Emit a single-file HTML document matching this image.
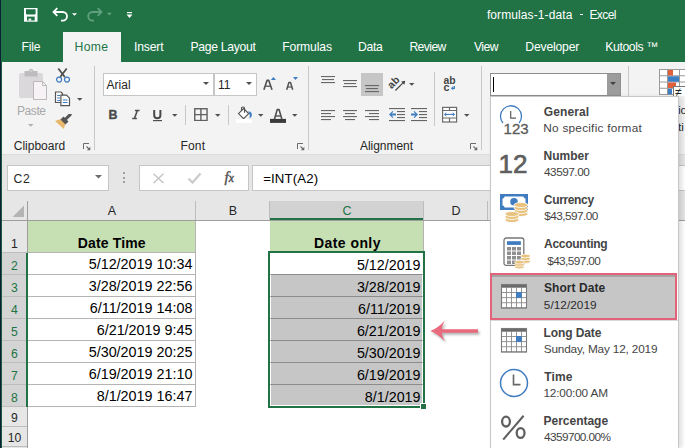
<!DOCTYPE html>
<html><head><meta charset="utf-8"><style>
html,body{margin:0;padding:0;}
body{width:685px;height:448px;overflow:hidden;position:relative;background:#fff;font-family:"Liberation Sans", sans-serif;}
body>div,body>svg{position:absolute;white-space:nowrap;}
</style></head><body>
<div style="left:0px;top:0px;width:685px;height:62px;background:#217346;"></div>
<div style="left:63px;top:32px;width:58px;height:30px;background:#f3f3f3;"></div>
<div style="left:0px;top:62px;width:685px;height:92px;background:#f3f3f3;"></div>
<div style="left:0px;top:154px;width:685px;height:67px;background:#e6e6e6;"></div>
<div style="left:0px;top:154px;width:685px;height:1px;background:#dcdcdc;"></div>
<svg style="left:23px;top:7px;" width="17" height="16" viewBox="0 0 17 16"><rect x="1" y="1" width="13.5" height="13.7" fill="#fff"/><path d="M3 2.2 H12.6 V6.8 L11.8 7.6 H3.8 L3 6.8z" fill="#217346"/><rect x="4" y="9.6" width="7.7" height="3.9" fill="#217346"/><rect x="5.6" y="11.6" width="2.6" height="1.9" fill="#fff"/></svg>
<svg style="left:50px;top:6px;" width="30" height="18" viewBox="0 0 30 18"><path d="M3.5 6 H12.7 A4.3 4.3 0 0 1 12.7 14.6 H11" fill="none" stroke="#fff" stroke-width="1.8"/><path d="M7.3 2.2 L3.5 6 L7.3 9.8" fill="none" stroke="#fff" stroke-width="1.8"/><path d="M22 7.2 h5 l-2.5 2.6z" fill="#fff"/></svg>
<svg style="left:86px;top:6px;" width="30" height="18" viewBox="0 0 30 18"><path d="M15.5 6 H6.5 A4.3 4.3 0 0 0 6.5 14.6 H8" fill="none" stroke="#61a07f" stroke-width="1.8"/><path d="M11.7 2.2 L15.5 6 L11.7 9.8" fill="none" stroke="#61a07f" stroke-width="1.8"/><path d="M20.8 6.8 h5 l-2.5 2.6z" fill="#61a07f"/></svg>
<svg style="left:126px;top:11px;" width="7" height="8" viewBox="0 0 7 8"><rect x="1" y="1" width="5" height="1.2" fill="#fff"/><path d="M0.5 3.5 h6 l-3 3.5z" fill="#fff"/></svg>
<div style="top:8.54px;font-size:12px;line-height:12px;color:#fff;font-weight:400;letter-spacing:0.1px;left:486.88px;">formulas-1-data</div>
<div style="left:579.7px;top:14.3px;width:3.8px;height:1.1px;background:#fff;"></div>
<div style="top:8.54px;font-size:12px;line-height:12px;color:#fff;font-weight:400;letter-spacing:-0.6px;left:589.44px;">Excel</div>
<div style="top:40.67px;font-size:12.2px;line-height:12.2px;color:#fff;font-weight:400;letter-spacing:-0.226px;left:21.52px;white-space:pre;">File</div>
<div style="top:40.67px;font-size:12.2px;line-height:12.2px;color:#217346;font-weight:400;letter-spacing:0.337px;left:74.62px;white-space:pre;">Home</div>
<div style="top:40.67px;font-size:12.2px;line-height:12.2px;color:#fff;font-weight:400;letter-spacing:-0.196px;left:134.1px;white-space:pre;">Insert</div>
<div style="top:40.67px;font-size:12.2px;line-height:12.2px;color:#fff;font-weight:400;letter-spacing:-0.297px;left:190.42px;white-space:pre;">Page Layout</div>
<div style="top:40.67px;font-size:12.2px;line-height:12.2px;color:#fff;font-weight:400;letter-spacing:-0.133px;left:282.22px;white-space:pre;">Formulas</div>
<div style="top:40.67px;font-size:12.2px;line-height:12.2px;color:#fff;font-weight:400;letter-spacing:-0.329px;left:358.12px;white-space:pre;">Data</div>
<div style="top:40.67px;font-size:12.2px;line-height:12.2px;color:#fff;font-weight:400;letter-spacing:-0.592px;left:409.42px;white-space:pre;">Review</div>
<div style="top:40.67px;font-size:12.2px;line-height:12.2px;color:#fff;font-weight:400;letter-spacing:-0.584px;left:474.0px;white-space:pre;">View</div>
<div style="top:40.67px;font-size:12.2px;line-height:12.2px;color:#fff;font-weight:400;letter-spacing:-0.189px;left:525.32px;white-space:pre;">Developer</div>
<div style="top:40.67px;font-size:12.2px;line-height:12.2px;color:#fff;font-weight:400;letter-spacing:-0.365px;left:605.22px;white-space:pre;">Kutools ™</div>
<div style="left:0px;top:0px;width:1px;height:448px;background:#0b2236;"></div>
<div style="left:1px;top:62px;width:1px;height:386px;background:#1d5a3c;"></div>
<div style="left:94px;top:66px;width:1px;height:84px;background:#c8c8c8;"></div>
<div style="left:308px;top:66px;width:1px;height:84px;background:#c8c8c8;"></div>
<div style="left:481px;top:66px;width:1px;height:84px;background:#c8c8c8;"></div>
<div style="left:628px;top:66px;width:1px;height:30px;background:#c8c8c8;"></div>
<div style="top:139.84px;font-size:12px;line-height:12px;color:#262626;font-weight:400;letter-spacing:-0.003px;left:-160.5515px;width:400px;text-align:center;">Clipboard</div>
<div style="top:139.84px;font-size:12px;line-height:12px;color:#262626;font-weight:400;letter-spacing:0.193px;left:-7.1535px;width:400px;text-align:center;">Font</div>
<div style="top:139.84px;font-size:12px;line-height:12px;color:#262626;font-weight:400;letter-spacing:-0.035px;left:186.4825px;width:400px;text-align:center;">Alignment</div>
<svg style="left:83px;top:143px;" width="8" height="8" viewBox="0 0 8 8"><path d="M0.5 6 V0.5 H6" fill="none" stroke="#6b6b6b" stroke-width="1"/><path d="M3.5 3.5 L6.5 6.5" stroke="#6b6b6b" stroke-width="1.1"/><path d="M7.3 3.8 V7.3 H3.8z" fill="#6b6b6b"/></svg>
<svg style="left:297px;top:143px;" width="8" height="8" viewBox="0 0 8 8"><path d="M0.5 6 V0.5 H6" fill="none" stroke="#6b6b6b" stroke-width="1"/><path d="M3.5 3.5 L6.5 6.5" stroke="#6b6b6b" stroke-width="1.1"/><path d="M7.3 3.8 V7.3 H3.8z" fill="#6b6b6b"/></svg>
<svg style="left:470px;top:143px;" width="8" height="8" viewBox="0 0 8 8"><path d="M0.5 6 V0.5 H6" fill="none" stroke="#6b6b6b" stroke-width="1"/><path d="M3.5 3.5 L6.5 6.5" stroke="#6b6b6b" stroke-width="1.1"/><path d="M7.3 3.8 V7.3 H3.8z" fill="#6b6b6b"/></svg>
<svg style="left:17px;top:68px;" width="32" height="34" viewBox="0 0 32 34"><rect x="2" y="5" width="24" height="25" rx="2" fill="#dbd8db"/><path d="M7.5 3 H20.5 V8.5 H7.5z" fill="#bdbdbd"/><circle cx="14" cy="3" r="2.2" fill="#bdbdbd"/><circle cx="14" cy="3" r="0.9" fill="#dbd8db"/><path d="M16.5 13.5 H25.5 L29.5 17.5 V31.5 H16.5z" fill="#f6f2f6" stroke="#b9b9b9" stroke-width="1"/><path d="M25.5 13.5 V17.5 H29.5" fill="none" stroke="#b9b9b9" stroke-width="1"/></svg>
<div style="top:104.74px;font-size:12px;line-height:12px;color:#a8a8a8;font-weight:400;letter-spacing:-0.44px;left:-168.72px;width:400px;text-align:center;">Paste</div>
<svg style="left:28px;top:124px;" width="6" height="4" viewBox="0 0 6 4"><path d="M0 0 h5.5 l-2.75 2.8z" fill="#b0b0b0"/></svg>
<svg style="left:54px;top:67px;" width="18" height="18" viewBox="0 0 18 18"><path d="M4.3 1.5 L10.8 10 M12.7 1.5 L6.2 10" stroke="#505050" stroke-width="1.8"/><circle cx="5.1" cy="12.6" r="2.5" fill="#f3f3f3" stroke="#3f7cc0" stroke-width="1.2"/><circle cx="13" cy="12.6" r="2.5" fill="#f3f3f3" stroke="#3f7cc0" stroke-width="1.2"/></svg>
<svg style="left:54px;top:91px;" width="18" height="17" viewBox="0 0 18 17"><path d="M1.5 1 H7 L8.5 2.5 V11.5 H1.5z" fill="#fff" stroke="#555" stroke-width="1.2"/><path d="M3.2 4.5 H6 M3.2 7 H6 M3.2 9.5 H6" stroke="#3f7cc0" stroke-width="1"/><path d="M6.9 4.2 H12.5 L15.5 7.2 V14.7 H6.9z" fill="#fff" stroke="#555" stroke-width="1.2"/><path d="M8.8 9 H13.5 M8.8 11.5 H13.5" stroke="#3f7cc0" stroke-width="1"/></svg>
<svg style="left:77px;top:98px;" width="6" height="4" viewBox="0 0 6 4"><path d="M0 0 h5.5 l-2.75 2.8z" fill="#505050"/></svg>
<svg style="left:54px;top:114px;" width="18" height="16" viewBox="0 0 18 16"><path d="M1 7 L7 5 L11.5 9.5 L9.8 15z" fill="#e8b86c"/><path d="M6.5 5.5 L9.5 2.5 L14.5 7.5 L11.5 10.5z" fill="#555"/><path d="M12 4.8 L16.2 0.6" stroke="#555" stroke-width="3" stroke-linecap="round"/></svg>
<div style="left:103px;top:73px;width:111px;height:23px;box-sizing:border-box;border:1px solid #c6c6c6;background:#fff;"></div>
<div style="top:78.84px;font-size:12px;line-height:12px;color:#262626;font-weight:400;letter-spacing:0.055px;left:106.4px;">Arial</div>
<svg style="left:203px;top:82px;" width="7" height="4" viewBox="0 0 7 4"><path d="M0 0 h6 l-3 3z" fill="#505050"/></svg>
<div style="left:214px;top:73px;width:43px;height:23px;box-sizing:border-box;border:1px solid #c6c6c6;background:#fff;"></div>
<div style="top:78.84px;font-size:12px;line-height:12px;color:#262626;font-weight:400;left:217.9px;">11</div>
<svg style="left:246px;top:82px;" width="7" height="4" viewBox="0 0 7 4"><path d="M0 0 h6 l-3 3z" fill="#505050"/></svg>
<svg style="left:262px;top:76px;" width="16" height="16" viewBox="0 0 16 16"><path d="M1.9 13.7 L5 4.4 H6.8 L10 13.7" fill="none" stroke="#505050" stroke-width="1.6" stroke-linejoin="round"/><path d="M3.3 10.2 H8.6" stroke="#505050" stroke-width="1.3"/><path d="M8.8 4 L11.4 1.1 L14 4z" fill="#3f7cc0"/></svg>
<svg style="left:285px;top:76px;" width="14" height="16" viewBox="0 0 14 16"><path d="M1.7 13.7 L3.9 6.4 H5.5 L7.7 13.7" fill="none" stroke="#505050" stroke-width="1.5" stroke-linejoin="round"/><path d="M2.8 11 H6.7" stroke="#505050" stroke-width="1.2"/><path d="M8 1.1 H13 L10.5 4z" fill="#3f7cc0"/></svg>
<svg style="left:108px;top:108px;" width="11" height="12" viewBox="0 0 11 12"><text x="0.6" y="11" font-family="Liberation Sans" font-weight="700" font-size="12.4" fill="#4a4a4a" stroke="#4a4a4a" stroke-width="0.35">B</text></svg>
<svg style="left:130px;top:108px;" width="11" height="12" viewBox="0 0 11 12"><path d="M4.9 2.5 H9.6 M2.2 10.5 H6.9 M7.3 2.5 L4.5 10.5" fill="none" stroke="#505050" stroke-width="1.6"/></svg>
<svg style="left:151px;top:108px;" width="13" height="15" viewBox="0 0 13 15"><path d="M3.2 2 V7.2 A3.1 3.1 0 0 0 9.4 7.2 V2" fill="none" stroke="#4a4a4a" stroke-width="2"/><rect x="2" y="12" width="9" height="1.2" fill="#505050"/></svg>
<svg style="left:172px;top:114px;" width="6" height="4" viewBox="0 0 6 4"><path d="M0 0 h5.5 l-2.75 2.8z" fill="#505050"/></svg>
<div style="left:185px;top:105px;width:1px;height:20px;background:#c8c8c8;"></div>
<svg style="left:194px;top:108px;" width="14" height="13" viewBox="0 0 14 13"><rect x="0.75" y="0.75" width="12.3" height="11.8" fill="none" stroke="#606060" stroke-width="1.4"/><path d="M6.9 1 V12.5 M1 6.65 H13" stroke="#606060" stroke-width="1.4"/></svg>
<svg style="left:215px;top:114px;" width="6" height="4" viewBox="0 0 6 4"><path d="M0 0 h5.5 l-2.75 2.8z" fill="#505050"/></svg>
<div style="left:228px;top:105px;width:1px;height:20px;background:#c8c8c8;"></div>
<svg style="left:236px;top:106px;" width="17" height="17" viewBox="0 0 17 17"><path d="M2.5 7.6 L7.6 2.5 L12.7 7.6 L7.6 12.7z" fill="#fff" stroke="#505050" stroke-width="1.1"/><path d="M5.5 5 V2.2 Q5.5 1 6.7 1 H7.3 Q8.5 1 8.5 2.2 V6.8" fill="none" stroke="#505050" stroke-width="1.1"/><path d="M12.3 5.2 Q16.6 6 15.8 9.8 Q15.3 11.5 13.6 12.6 Q14.4 8.6 12.3 5.2z" fill="#3f7cc0"/><rect x="0" y="13" width="15.8" height="3.9" fill="#fff"/></svg>
<svg style="left:258px;top:114px;" width="6" height="4" viewBox="0 0 6 4"><path d="M0 0 h5.5 l-2.75 2.8z" fill="#505050"/></svg>
<svg style="left:270px;top:108px;" width="17" height="16" viewBox="0 0 17 16"><path d="M4.5 11 L7.2 1.6 H9.1 L11.8 11" fill="none" stroke="#505050" stroke-width="1.6" stroke-linejoin="round"/><path d="M5.6 8 H10.7" stroke="#505050" stroke-width="1.4"/><rect x="0" y="10.9" width="16" height="4" fill="#3a3a3a"/></svg>
<svg style="left:292px;top:114px;" width="6" height="4" viewBox="0 0 6 4"><path d="M0 0 h5.5 l-2.75 2.8z" fill="#505050"/></svg>
<svg style="left:321px;top:76px;" width="16" height="14" viewBox="0 0 16 14"><rect x="0" y="0" width="14" height="1.1" fill="#666"/><rect x="1" y="3" width="12" height="1.1" fill="#666"/><rect x="0" y="6" width="14" height="1.1" fill="#666"/></svg>
<svg style="left:343px;top:80px;" width="16" height="14" viewBox="0 0 16 14"><rect x="0" y="0" width="14" height="1.1" fill="#666"/><rect x="1" y="3" width="12" height="1.1" fill="#666"/><rect x="0" y="6" width="14" height="1.1" fill="#666"/></svg>
<div style="left:361px;top:73px;width:22px;height:23px;background:#c6c6c6;"></div>
<svg style="left:365px;top:85px;" width="16" height="14" viewBox="0 0 16 14"><rect x="0" y="0" width="14" height="1.1" fill="#666"/><rect x="1" y="3" width="12" height="1.1" fill="#666"/><rect x="0" y="6" width="14" height="1.1" fill="#666"/></svg>
<svg style="left:321px;top:110px;" width="16" height="14" viewBox="0 0 16 14"><rect x="0" y="0" width="14" height="1.1" fill="#666"/><rect x="0" y="3" width="10" height="1.1" fill="#666"/><rect x="0" y="6" width="14" height="1.1" fill="#666"/><rect x="0" y="9" width="10" height="1.1" fill="#666"/></svg>
<svg style="left:343px;top:110px;" width="16" height="14" viewBox="0 0 16 14"><rect x="0" y="0" width="14" height="1.1" fill="#666"/><rect x="2" y="3" width="10" height="1.1" fill="#666"/><rect x="0" y="6" width="14" height="1.1" fill="#666"/><rect x="2" y="9" width="10" height="1.1" fill="#666"/></svg>
<svg style="left:365px;top:110px;" width="16" height="14" viewBox="0 0 16 14"><rect x="0" y="0" width="14" height="1.1" fill="#666"/><rect x="4" y="3" width="10" height="1.1" fill="#666"/><rect x="0" y="6" width="14" height="1.1" fill="#666"/><rect x="4" y="9" width="10" height="1.1" fill="#666"/></svg>
<svg style="left:386px;top:72px;" width="24" height="24" viewBox="0 0 24 24"><text x="0" y="0" font-family="Liberation Sans" font-weight="700" font-size="10.5" fill="#454545" transform="translate(5.6 17.2) rotate(-45)">ab</text><path d="M9.4 18.5 L17.5 10.4" stroke="#454545" stroke-width="1.2"/><path d="M19.2 8.7 L15.2 9.5 L18.4 12.7z" fill="#454545"/></svg>
<svg style="left:409px;top:83px;" width="6" height="4" viewBox="0 0 6 4"><path d="M0 0 h5.5 l-2.75 2.8z" fill="#505050"/></svg>
<svg style="left:389px;top:107px;" width="17" height="15" viewBox="0 0 17 15"><g fill="#666"><rect x="0" y="1" width="16" height="1.1"/><rect x="8" y="4" width="8" height="1.1"/><rect x="8" y="7" width="8" height="1.1"/><rect x="8" y="10" width="8" height="1.1"/><rect x="0" y="13" width="16" height="1.1"/></g><path d="M0 7.5 L3.6 4 L4.4 4.8 L2.6 6.6 H7 V8.4 H2.6 L4.4 10.2 L3.6 11z" fill="#3f7cc0"/></svg>
<svg style="left:411px;top:107px;" width="17" height="15" viewBox="0 0 17 15"><g fill="#666"><rect x="0" y="1" width="16" height="1.1"/><rect x="8" y="4" width="8" height="1.1"/><rect x="8" y="7" width="8" height="1.1"/><rect x="8" y="10" width="8" height="1.1"/><rect x="0" y="13" width="16" height="1.1"/></g><path d="M7 7.5 L3.4 4 L2.6 4.8 L4.4 6.6 H0 V8.4 H4.4 L2.6 10.2 L3.4 11z" fill="#3f7cc0"/></svg>
<div style="left:434px;top:72px;width:1px;height:54px;background:#c8c8c8;"></div>
<svg style="left:442px;top:74px;" width="18" height="20" viewBox="0 0 18 20"><text x="1.6" y="9.5" font-family="Liberation Sans" font-weight="700" font-size="10.3" fill="#454545">ab</text><text x="1.6" y="16.9" font-family="Liberation Sans" font-weight="700" font-size="10.8" fill="#454545">c</text><path d="M12.3 12 V14.3 H10" fill="none" stroke="#3f7cc0" stroke-width="1.3"/><path d="M8.8 14.3 l2.4 -2 v4z" fill="#3f7cc0"/></svg>
<svg style="left:441px;top:106px;" width="17" height="17" viewBox="0 0 17 17"><rect x="1.6" y="1.4" width="14" height="14.6" fill="#fff" stroke="#6b6b6b" stroke-width="1.2"/><path d="M1.6 4.5 H15.6 M1.6 12 H15.6 M8.5 1.4 V4.5 M8.5 12 V16" stroke="#6b6b6b" stroke-width="1.2"/><path d="M4.5 8.4 H12.5" stroke="#3f7cc0" stroke-width="1.1"/><path d="M3 8.4 l2.2 -2.2 v4.4z M14 8.4 l-2.2 -2.2 v4.4z" fill="#3f7cc0"/></svg>
<svg style="left:464px;top:114px;" width="6" height="4" viewBox="0 0 6 4"><path d="M0 0 h5.5 l-2.75 2.8z" fill="#505050"/></svg>
<div style="left:490px;top:73px;width:131px;height:23px;box-sizing:border-box;border:1px solid #8f8f8f;background:#fff;"></div>
<div style="left:607px;top:74px;width:13px;height:21px;background:#9c9c9c;"></div>
<svg style="left:610px;top:82px;" width="7" height="4" viewBox="0 0 7 4"><path d="M0 0 h6 l-3 3z" fill="#404040"/></svg>
<div style="left:493px;top:77px;width:1px;height:15px;background:#000;"></div>
<svg style="left:659px;top:69px;" width="26" height="27" viewBox="0 0 26 27"><rect x="0.5" y="0.5" width="30" height="25" fill="#fff" stroke="#9a9a9a"/><path d="M0.5 6.75 H30 M0.5 13 H30 M0.5 19.25 H30 M8.5 0 V26 M20.5 0 V26" stroke="#9a9a9a" stroke-width="1"/><rect x="9" y="1" width="5" height="5.5" fill="#e0603a"/><rect x="9" y="7.25" width="11" height="5.5" fill="#3c7fc4"/><rect x="9" y="13.5" width="8" height="5.5" fill="#e0603a"/><rect x="9" y="19.75" width="4" height="5.5" fill="#3c7fc4"/><rect x="14.5" y="17.5" width="12" height="10" fill="#fff" stroke="#777"/><text x="16.2" y="26.5" font-family="Liberation Sans" font-size="12" fill="#222">≠</text></svg>
<div style="top:104.1px;font-size:11.7px;line-height:11.7px;color:#262626;font-weight:400;left:678px;white-space:pre;">ic</div>
<div style="top:121.1px;font-size:11.7px;line-height:11.7px;color:#262626;font-weight:400;left:678px;white-space:pre;">ti</div>
<div style="left:7px;top:165px;width:102px;height:26px;box-sizing:border-box;border:1px solid #c6c6c6;background:#fff;"></div>
<div style="top:172.67px;font-size:12.2px;line-height:12.2px;color:#262626;font-weight:400;letter-spacing:0.904px;left:13.39px;">C2</div>
<svg style="left:95px;top:175px;" width="8" height="5" viewBox="0 0 8 5"><path d="M0 0 h7 l-3.5 3.5z" fill="#6b6b6b"/></svg>
<div style="left:123px;top:172px;width:2px;height:2px;background:#a0a0a0;"></div>
<div style="left:123px;top:176.5px;width:2px;height:2px;background:#a0a0a0;"></div>
<div style="left:123px;top:181px;width:2px;height:2px;background:#a0a0a0;"></div>
<div style="left:139px;top:165px;width:110px;height:26px;box-sizing:border-box;border:1px solid #c6c6c6;background:#fff;"></div>
<svg style="left:187px;top:172px;" width="15" height="13" viewBox="0 0 15 13"><path d="M1.5 6.5 L5.5 10.5 L13.5 1.5" fill="none" stroke="#cccccc" stroke-width="2.4"/></svg>
<svg style="left:153px;top:173px;" width="11" height="11" viewBox="0 0 11 11"><path d="M0.5 0.8 L10.5 10 M10.5 0.8 L0.5 10" stroke="#c4c4c4" stroke-width="1.4"/></svg>
<div style="top:169.8px;font-size:15px;line-height:15px;color:#505050;font-weight:400;left:224.5px;font-family:'Liberation Serif';-webkit-text-stroke:0.4px #505050;"><i>f</i><i style="font-size:11.5px">x</i></div>
<div style="left:252px;top:165px;width:440px;height:26px;box-sizing:border-box;border:1px solid #c6c6c6;background:#fff;"></div>
<div style="top:171.53px;font-size:13.2px;line-height:13.2px;color:#000;font-weight:400;letter-spacing:0.171px;left:263.14px;">=INT(A2)</div>
<div style="left:2px;top:201px;width:683px;height:19px;background:#e6e6e6;"></div>
<div style="left:2px;top:220px;width:683px;height:1px;background:#9e9e9e;"></div>
<div style="left:2px;top:221px;width:25px;height:227px;background:#e6e6e6;"></div>
<div style="left:27px;top:201px;width:1px;height:247px;background:#9e9e9e;"></div>
<svg style="left:12px;top:205px;" width="13" height="13" viewBox="0 0 13 13"><path d="M0.5 12 L12 0.5 V12z" fill="#b4b4b4"/></svg>
<div style="left:28px;top:221px;width:657px;height:227px;background:#fff;"></div>
<div style="left:195px;top:201px;width:1px;height:19px;background:#bdbdbd;"></div>
<div style="top:204.72px;font-size:12.5px;line-height:12.5px;color:#262626;font-weight:400;left:-88.0px;width:400px;text-align:center;">A</div>
<div style="left:269px;top:201px;width:1px;height:19px;background:#bdbdbd;"></div>
<div style="top:204.72px;font-size:12.5px;line-height:12.5px;color:#262626;font-weight:400;left:33.0px;width:400px;text-align:center;">B</div>
<div style="left:270px;top:201px;width:153px;height:19px;background:#d2d2d2;"></div>
<div style="left:270px;top:218px;width:153px;height:2px;background:#217346;"></div>
<div style="left:423px;top:201px;width:1px;height:19px;background:#bdbdbd;"></div>
<div style="top:204.72px;font-size:12.5px;line-height:12.5px;color:#217346;font-weight:400;left:147.0px;width:400px;text-align:center;">C</div>
<div style="left:487px;top:201px;width:1px;height:19px;background:#bdbdbd;"></div>
<div style="top:204.72px;font-size:12.5px;line-height:12.5px;color:#262626;font-weight:400;left:256.0px;width:400px;text-align:center;">D</div>
<div style="left:2px;top:252px;width:25px;height:1px;background:#bdbdbd;"></div>
<div style="top:237.67px;font-size:12.2px;line-height:12.2px;color:#262626;font-weight:400;left:-185.5px;width:400px;text-align:center;">1</div>
<div style="left:2px;top:253px;width:25px;height:21px;background:#d4d4d4;"></div>
<div style="left:2px;top:274px;width:25px;height:1px;background:#bdbdbd;"></div>
<div style="top:259.67px;font-size:12.2px;line-height:12.2px;color:#217346;font-weight:400;left:-185.5px;width:400px;text-align:center;">2</div>
<div style="left:2px;top:275px;width:25px;height:21px;background:#d4d4d4;"></div>
<div style="left:2px;top:296px;width:25px;height:1px;background:#bdbdbd;"></div>
<div style="top:281.67px;font-size:12.2px;line-height:12.2px;color:#217346;font-weight:400;left:-185.5px;width:400px;text-align:center;">3</div>
<div style="left:2px;top:297px;width:25px;height:21px;background:#d4d4d4;"></div>
<div style="left:2px;top:318px;width:25px;height:1px;background:#bdbdbd;"></div>
<div style="top:303.67px;font-size:12.2px;line-height:12.2px;color:#217346;font-weight:400;left:-185.5px;width:400px;text-align:center;">4</div>
<div style="left:2px;top:319px;width:25px;height:21px;background:#d4d4d4;"></div>
<div style="left:2px;top:340px;width:25px;height:1px;background:#bdbdbd;"></div>
<div style="top:325.67px;font-size:12.2px;line-height:12.2px;color:#217346;font-weight:400;left:-185.5px;width:400px;text-align:center;">5</div>
<div style="left:2px;top:341px;width:25px;height:21px;background:#d4d4d4;"></div>
<div style="left:2px;top:362px;width:25px;height:1px;background:#bdbdbd;"></div>
<div style="top:347.67px;font-size:12.2px;line-height:12.2px;color:#217346;font-weight:400;left:-185.5px;width:400px;text-align:center;">6</div>
<div style="left:2px;top:363px;width:25px;height:21px;background:#d4d4d4;"></div>
<div style="left:2px;top:384px;width:25px;height:1px;background:#bdbdbd;"></div>
<div style="top:369.67px;font-size:12.2px;line-height:12.2px;color:#217346;font-weight:400;left:-185.5px;width:400px;text-align:center;">7</div>
<div style="left:2px;top:385px;width:25px;height:21px;background:#d4d4d4;"></div>
<div style="left:2px;top:406px;width:25px;height:1px;background:#bdbdbd;"></div>
<div style="top:391.67px;font-size:12.2px;line-height:12.2px;color:#217346;font-weight:400;left:-185.5px;width:400px;text-align:center;">8</div>
<div style="left:2px;top:426px;width:25px;height:1px;background:#bdbdbd;"></div>
<div style="top:411.67px;font-size:12.2px;line-height:12.2px;color:#262626;font-weight:400;left:-185.5px;width:400px;text-align:center;">9</div>
<div style="left:2px;top:446px;width:25px;height:1px;background:#bdbdbd;"></div>
<div style="top:431.67px;font-size:12.2px;line-height:12.2px;color:#262626;font-weight:400;left:-185.5px;width:400px;text-align:center;">10</div>
<div style="left:2px;top:470px;width:25px;height:1px;background:#bdbdbd;"></div>
<div style="top:455.67px;font-size:12.2px;line-height:12.2px;color:#262626;font-weight:400;left:-185.5px;width:400px;text-align:center;">11</div>
<div style="left:26px;top:253px;width:2px;height:154px;background:#217346;"></div>
<div style="left:28px;top:221px;width:167px;height:31px;background:#c6e0b4;"></div>
<div style="left:270px;top:221px;width:153px;height:31px;background:#c6e0b4;"></div>
<div style="left:271px;top:275px;width:151px;height:130px;background:#c6c6c6;"></div>
<div style="left:195px;top:221px;width:1px;height:186px;background:#b4b4b4;"></div>
<div style="left:28px;top:252px;width:168px;height:1px;background:#b4b4b4;"></div>
<div style="left:28px;top:274px;width:168px;height:1px;background:#b4b4b4;"></div>
<div style="left:28px;top:296px;width:168px;height:1px;background:#b4b4b4;"></div>
<div style="left:28px;top:318px;width:168px;height:1px;background:#b4b4b4;"></div>
<div style="left:28px;top:340px;width:168px;height:1px;background:#b4b4b4;"></div>
<div style="left:28px;top:362px;width:168px;height:1px;background:#b4b4b4;"></div>
<div style="left:28px;top:384px;width:168px;height:1px;background:#b4b4b4;"></div>
<div style="left:28px;top:406px;width:168px;height:1px;background:#b4b4b4;"></div>
<div style="left:423px;top:221px;width:1px;height:186px;background:#b4b4b4;"></div>
<div style="left:270px;top:252px;width:154px;height:1px;background:#b4b4b4;"></div>
<div style="left:270px;top:274px;width:154px;height:1px;background:#b4b4b4;"></div>
<div style="left:270px;top:296px;width:154px;height:1px;background:#b4b4b4;"></div>
<div style="left:270px;top:318px;width:154px;height:1px;background:#b4b4b4;"></div>
<div style="left:270px;top:340px;width:154px;height:1px;background:#b4b4b4;"></div>
<div style="left:270px;top:362px;width:154px;height:1px;background:#b4b4b4;"></div>
<div style="left:270px;top:384px;width:154px;height:1px;background:#b4b4b4;"></div>
<div style="left:270px;top:406px;width:154px;height:1px;background:#b4b4b4;"></div>
<div style="left:271px;top:274px;width:151px;height:1px;background:#8c8c8c;"></div>
<div style="left:271px;top:296px;width:151px;height:1px;background:#8c8c8c;"></div>
<div style="left:271px;top:318px;width:151px;height:1px;background:#8c8c8c;"></div>
<div style="left:271px;top:340px;width:151px;height:1px;background:#8c8c8c;"></div>
<div style="left:271px;top:362px;width:151px;height:1px;background:#8c8c8c;"></div>
<div style="left:271px;top:384px;width:151px;height:1px;background:#8c8c8c;"></div>
<div style="top:235.65px;font-size:14px;line-height:14px;color:#000;font-weight:700;letter-spacing:0.158px;left:-88.271px;width:400px;text-align:center;">Date&nbsp;Time</div>
<div style="top:235.65px;font-size:14px;line-height:14px;color:#000;font-weight:700;letter-spacing:0.435px;left:147.4675px;width:400px;text-align:center;">Date only</div>
<div style="top:257.45px;font-size:14.35px;line-height:14.35px;color:#000;font-weight:400;right:492.6px;text-align:right;">5/12/2019 10:34</div>
<div style="top:257.5px;font-size:14.3px;line-height:14.3px;color:#000;font-weight:400;right:264.5px;text-align:right;">5/12/2019</div>
<div style="top:279.45px;font-size:14.35px;line-height:14.35px;color:#000;font-weight:400;right:492.6px;text-align:right;">3/28/2019 22:56</div>
<div style="top:279.5px;font-size:14.3px;line-height:14.3px;color:#000;font-weight:400;right:264.5px;text-align:right;">3/28/2019</div>
<div style="top:301.45px;font-size:14.35px;line-height:14.35px;color:#000;font-weight:400;right:492.6px;text-align:right;">6/11/2019 14:08</div>
<div style="top:301.5px;font-size:14.3px;line-height:14.3px;color:#000;font-weight:400;right:264.5px;text-align:right;">6/11/2019</div>
<div style="top:323.45px;font-size:14.35px;line-height:14.35px;color:#000;font-weight:400;right:492.6px;text-align:right;">6/21/2019 9:45</div>
<div style="top:323.5px;font-size:14.3px;line-height:14.3px;color:#000;font-weight:400;right:264.5px;text-align:right;">6/21/2019</div>
<div style="top:345.45px;font-size:14.35px;line-height:14.35px;color:#000;font-weight:400;right:492.6px;text-align:right;">5/30/2019 20:25</div>
<div style="top:345.5px;font-size:14.3px;line-height:14.3px;color:#000;font-weight:400;right:264.5px;text-align:right;">5/30/2019</div>
<div style="top:367.45px;font-size:14.35px;line-height:14.35px;color:#000;font-weight:400;right:492.6px;text-align:right;">6/19/2019 21:10</div>
<div style="top:367.5px;font-size:14.3px;line-height:14.3px;color:#000;font-weight:400;right:264.5px;text-align:right;">6/19/2019</div>
<div style="top:389.45px;font-size:14.35px;line-height:14.35px;color:#000;font-weight:400;right:492.6px;text-align:right;">8/1/2019 16:47</div>
<div style="top:389.5px;font-size:14.3px;line-height:14.3px;color:#000;font-weight:400;right:264.5px;text-align:right;">8/1/2019</div>
<div style="left:268px;top:251px;width:157px;height:2px;background:#217346;"></div>
<div style="left:268px;top:251px;width:2px;height:157px;background:#217346;"></div>
<div style="left:423px;top:251px;width:2px;height:152px;background:#217346;"></div>
<div style="left:268px;top:406px;width:153px;height:2px;background:#217346;"></div>
<div style="left:420px;top:403px;width:7px;height:7px;background:#fff;"></div>
<div style="left:421px;top:404px;width:5px;height:5px;background:#217346;"></div>
<svg style="left:426px;top:316px;" width="58" height="32" viewBox="0 0 58 32"><defs><filter id="sh" x="-20%" y="-30%" width="150%" height="180%"><feGaussianBlur stdDeviation="1"/></filter></defs><g transform="translate(1.5,2)" filter="url(#sh)" opacity="0.45"><path d="M4.3 15 Q12.5 11.8 18.8 4.5 Q15.5 11 16 13.3 H52 V16.8 H16 Q15.5 19 18.8 25.3 Q12.5 18.2 4.3 15z" fill="#555"/></g><path d="M4.3 15 Q12.5 11.8 18.8 4.5 Q15.5 11 16 13.3 H52 V16.8 H16 Q15.5 19 18.8 25.3 Q12.5 18.2 4.3 15z" fill="#e96a7c"/></svg>
<div style="left:492px;top:97px;width:190px;height:351px;background:rgba(0,0,0,0.12);filter:blur(2px);"></div>
<div style="left:490px;top:96px;width:189px;height:360px;box-sizing:border-box;border:1px solid #c6c6c6;background:#fff;"></div>
<div style="left:492px;top:275px;width:183px;height:43px;background:#c6c6c6;"></div>
<div style="left:492px;top:275px;width:183px;height:2px;background:#a4a4a4;"></div>
<div style="left:491px;top:320px;width:187px;height:1px;background:#d8d8d8;"></div>
<div style="left:490px;top:273px;width:187px;height:47px;box-sizing:border-box;border:2px solid #e2627a;background:transparent;"></div>
<div style="top:106.04px;font-size:12px;line-height:12px;color:#444;font-weight:700;letter-spacing:0.093px;left:543.82px;white-space:pre;">General</div>
<div style="top:123.21px;font-size:11.8px;line-height:11.8px;color:#444;font-weight:400;letter-spacing:0.233px;left:543.36px;white-space:pre;">No specific format</div>
<div style="top:150.14px;font-size:12px;line-height:12px;color:#444;font-weight:700;letter-spacing:-0.004px;left:543.58px;white-space:pre;">Number</div>
<div style="top:167.31px;font-size:11.8px;line-height:11.8px;color:#444;font-weight:400;letter-spacing:-0.5px;left:544.06px;white-space:pre;">43597.00</div>
<div style="top:194.24px;font-size:12px;line-height:12px;color:#444;font-weight:700;letter-spacing:-0.34px;left:543.82px;white-space:pre;">Currency</div>
<div style="top:211.41px;font-size:11.8px;line-height:11.8px;color:#444;font-weight:400;letter-spacing:-0.548px;left:544.18px;white-space:pre;">$43,597.00</div>
<div style="top:238.34px;font-size:12px;line-height:12px;color:#444;font-weight:700;letter-spacing:-0.271px;left:544.06px;white-space:pre;">Accounting</div>
<div style="top:255.51px;font-size:11.8px;line-height:11.8px;color:#444;font-weight:400;letter-spacing:-0.592px;left:547.18px;white-space:pre;">$43,597.00</div>
<div style="top:282.44px;font-size:12px;line-height:12px;color:#2b2b2b;font-weight:700;letter-spacing:0.058px;left:543.94px;white-space:pre;">Short Date</div>
<div style="top:299.61px;font-size:11.8px;line-height:11.8px;color:#2b2b2b;font-weight:400;letter-spacing:0.032px;left:543.83px;white-space:pre;">5/12/2019</div>
<div style="top:326.54px;font-size:12px;line-height:12px;color:#444;font-weight:700;letter-spacing:-0.11px;left:543.58px;white-space:pre;">Long Date</div>
<div style="top:343.71px;font-size:11.8px;line-height:11.8px;color:#444;font-weight:400;letter-spacing:-0.18px;left:543.71px;white-space:pre;">Sunday, May 12, 2019</div>
<div style="top:370.64px;font-size:12px;line-height:12px;color:#444;font-weight:700;letter-spacing:0.153px;left:544.18px;white-space:pre;">Time</div>
<div style="top:387.81px;font-size:11.8px;line-height:11.8px;color:#444;font-weight:400;letter-spacing:-0.173px;left:543.47px;white-space:pre;">12:00:00 AM</div>
<div style="top:414.74px;font-size:12px;line-height:12px;color:#444;font-weight:700;letter-spacing:-0.022px;left:543.58px;white-space:pre;">Percentage</div>
<div style="top:431.91px;font-size:11.8px;line-height:11.8px;color:#444;font-weight:400;letter-spacing:-0.592px;left:544.06px;white-space:pre;">4359700.00%</div>
<svg style="left:498px;top:104px;" width="32" height="32" viewBox="0 0 32 32"><path d="M4.96 19 A10.5 10.5 0 1 1 21.04 19" fill="none" stroke="#3f7cc0" stroke-width="1.3"/><path d="M12.7 7 V14.2 H18" fill="none" stroke="#5b5b5b" stroke-width="1.2"/><text x="5.6" y="29.6" font-family="Liberation Sans" font-size="15" fill="#5b5b5b" stroke="#5b5b5b" stroke-width="0.3">123</text></svg>
<svg style="left:496px;top:150px;" width="36" height="26" viewBox="0 0 36 26"><text x="2.6" y="23.3" font-family="Liberation Sans" font-size="26" fill="#5f5f5f" stroke="#5f5f5f" stroke-width="0.7">12</text></svg>
<svg style="left:499px;top:193px;" width="32" height="30" viewBox="0 0 32 30"><rect x="1" y="1" width="28" height="16" fill="#3f7cc0"/><rect x="3.5" y="3.5" width="23" height="11" fill="#fff"/><circle cx="3.5" cy="3.5" r="2" fill="#3f7cc0"/><circle cx="26.5" cy="3.5" r="2" fill="#3f7cc0"/><circle cx="3.5" cy="14.5" r="2" fill="#3f7cc0"/><circle cx="26.5" cy="14.5" r="2" fill="#3f7cc0"/><circle cx="15" cy="8.7" r="3.8" fill="#3f7cc0"/><g fill="#e9c27e" stroke="#fff" stroke-width="0.8"><ellipse cx="22" cy="21" rx="7" ry="2.5"/><ellipse cx="22" cy="18" rx="7" ry="2.5"/><ellipse cx="22" cy="15" rx="7" ry="2.5"/><ellipse cx="22" cy="12" rx="7" ry="2.5"/><ellipse cx="13" cy="27" rx="7" ry="2.5"/><ellipse cx="13" cy="24" rx="7" ry="2.5"/><ellipse cx="13" cy="21" rx="7" ry="2.5"/></g></svg>
<svg style="left:502px;top:236px;" width="32" height="34" viewBox="0 0 32 34"><rect x="2" y="2" width="19.8" height="27.4" rx="2.2" fill="#fff" stroke="#777" stroke-width="1.3"/><rect x="5" y="5.2" width="13.9" height="3.7" fill="#3f7cc0"/><g fill="#8f8f8f"><rect x="5" y="11" width="4" height="3.5"/><rect x="10" y="11" width="4" height="3.5"/><rect x="15" y="11" width="4" height="3.5"/><rect x="5" y="15.5" width="4" height="3.5"/><rect x="10" y="15.5" width="4" height="3.5"/><rect x="15" y="15.5" width="4" height="3.5"/><rect x="5" y="20" width="4" height="3.5"/><rect x="10" y="20" width="4" height="3.5"/><rect x="15" y="20" width="4" height="3.5"/><rect x="5" y="24.5" width="4" height="3.5"/><rect x="10" y="24.5" width="4" height="3.5"/><rect x="15" y="24.5" width="4" height="3.5"/></g><g fill="#e9c27e" stroke="#fff" stroke-width="0.7"><ellipse cx="23.5" cy="25.6" rx="4.8" ry="1.8"/><ellipse cx="23.5" cy="22.8" rx="4.8" ry="1.8"/><ellipse cx="23.5" cy="20" rx="4.8" ry="1.8"/><ellipse cx="17.4" cy="31" rx="4.8" ry="1.8"/><ellipse cx="17.4" cy="28.6" rx="4.8" ry="1.8"/><ellipse cx="17.4" cy="26.2" rx="4.8" ry="1.8"/></g></svg>
<svg style="left:500px;top:283px;" width="28" height="26" viewBox="0 0 28 26"><rect x="1" y="1" width="26" height="3.5" fill="#6b6b6b"/><rect x="1" y="4" width="26" height="21" fill="#fff"/><rect x="1" y="4" width="0.9" height="21" fill="#8a8a8a"/><rect x="6" y="4" width="0.9" height="21" fill="#8a8a8a"/><rect x="11" y="4" width="0.9" height="21" fill="#8a8a8a"/><rect x="16" y="4" width="0.9" height="21" fill="#8a8a8a"/><rect x="21" y="4" width="0.9" height="21" fill="#8a8a8a"/><rect x="26" y="4" width="0.9" height="21" fill="#8a8a8a"/><rect x="1" y="4.0" width="26" height="0.9" fill="#8a8a8a"/><rect x="1" y="9.1" width="26" height="0.9" fill="#8a8a8a"/><rect x="1" y="14.2" width="26" height="0.9" fill="#8a8a8a"/><rect x="1" y="19.299999999999997" width="26" height="0.9" fill="#8a8a8a"/><rect x="1" y="24.4" width="26" height="0.9" fill="#8a8a8a"/><rect x="1.5" y="1.5" width="25" height="23.5" fill="none" stroke="#7a7a7a" stroke-width="1.1"/><rect x="16" y="9" width="5.8" height="5.9" fill="#3f7cc0"/></svg>
<svg style="left:500px;top:327px;" width="28" height="26" viewBox="0 0 28 26"><rect x="1" y="1" width="26" height="3.5" fill="#6b6b6b"/><rect x="1" y="4" width="26" height="21" fill="#fff"/><rect x="1" y="4" width="0.9" height="21" fill="#8a8a8a"/><rect x="6" y="4" width="0.9" height="21" fill="#8a8a8a"/><rect x="11" y="4" width="0.9" height="21" fill="#8a8a8a"/><rect x="16" y="4" width="0.9" height="21" fill="#8a8a8a"/><rect x="21" y="4" width="0.9" height="21" fill="#8a8a8a"/><rect x="26" y="4" width="0.9" height="21" fill="#8a8a8a"/><rect x="1" y="4.0" width="26" height="0.9" fill="#8a8a8a"/><rect x="1" y="9.1" width="26" height="0.9" fill="#8a8a8a"/><rect x="1" y="14.2" width="26" height="0.9" fill="#8a8a8a"/><rect x="1" y="19.299999999999997" width="26" height="0.9" fill="#8a8a8a"/><rect x="1" y="24.4" width="26" height="0.9" fill="#8a8a8a"/><rect x="1.5" y="1.5" width="25" height="23.5" fill="none" stroke="#7a7a7a" stroke-width="1.1"/><rect x="16" y="9" width="5.8" height="5.9" fill="#3f7cc0"/></svg>
<svg style="left:499px;top:368px;" width="31" height="31" viewBox="0 0 31 31"><circle cx="15" cy="15" r="13.5" fill="none" stroke="#3f7cc0" stroke-width="1.5"/><path d="M14.5 6.6 V16.6 H21.5" fill="none" stroke="#666" stroke-width="1.6"/></svg>
<svg style="left:499px;top:414px;" width="30" height="28" viewBox="0 0 30 28"><ellipse cx="7" cy="7.6" rx="3.9" ry="4.9" fill="none" stroke="#606060" stroke-width="2.3"/><ellipse cx="21.6" cy="19" rx="3.9" ry="4.9" fill="none" stroke="#606060" stroke-width="2.3"/><path d="M4.2 25.6 L24.6 1.8" stroke="#606060" stroke-width="2.1"/></svg>
</body></html>
